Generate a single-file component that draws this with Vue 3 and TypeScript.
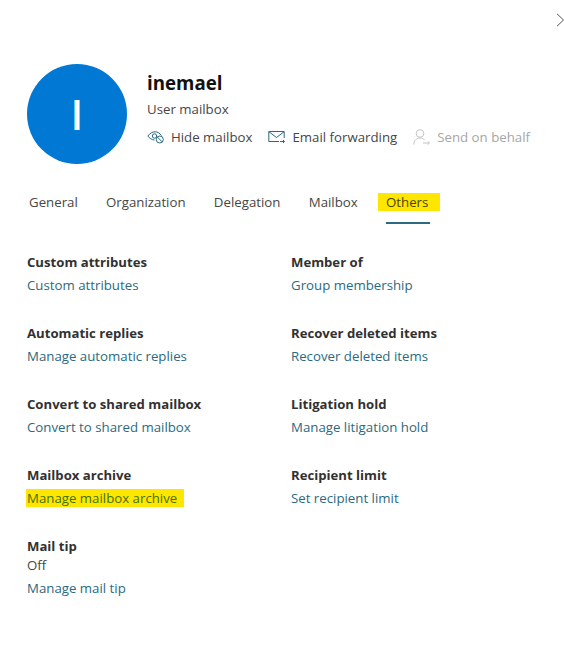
<script setup lang="ts">
interface Item { title: string; value?: string; link: string; mark?: boolean }
const tabs = ['General', 'Organization', 'Delegation', 'Mailbox']
const left: Item[] = [
  { title: 'Custom attributes', link: 'Custom attributes' },
  { title: 'Automatic replies', link: 'Manage automatic replies' },
  { title: 'Convert to shared mailbox', link: 'Convert to shared mailbox' },
  { title: 'Mailbox archive', link: 'Manage mailbox archive', mark: true },
  { title: 'Mail tip', value: 'Off', link: 'Manage mail tip' },
]
const right: Item[] = [
  { title: 'Member of', link: 'Group membership' },
  { title: 'Recover deleted items', link: 'Recover deleted items' },
  { title: 'Litigation hold', link: 'Manage litigation hold' },
  { title: 'Recipient limit', link: 'Set recipient limit' },
]
</script>

<template>
  <div class="panel">
    <div class="close-row">
      <svg width="10" height="14" viewBox="0 0 10 14"><path d="M3 .8 9.500 7 3 13.200" fill="none" stroke="#555" stroke-width="1"/></svg>
    </div>
    <header class="head">
      <div class="avatar"><span class="initial">I</span></div>
      <div class="meta">
        <div class="name">inemael</div>
        <div class="kind">User mailbox</div>
        <div class="actions">
          <span class="action">
            <svg width="18" height="14" viewBox="0 0 18 14" fill="none" stroke="#2b6a80" stroke-width="1">
              <path d="M.8 6C3 3 5.500 1.800 8 1.800S12.500 3 14.500 5.500"/>
              <path d="M.8 6C2.500 8.300 4.800 9.800 7.500 10"/>
              <circle cx="7.500" cy="6" r="2.200"/>
              <circle cx="12.800" cy="9.500" r="3.500"/>
              <path d="M10.400 7.100l4.800 4.800"/>
            </svg>
            Hide mailbox
          </span>
          <span class="action">
            <svg width="18" height="14" viewBox="0 0 18 14" fill="none" stroke="#2b6a80" stroke-width="1">
              <path d="M11 11.500H.8V1.500h15.400v6.500"/>
              <path d="M1 1.800 8.500 7.500 16 1.800"/>
              <path d="M12 11.500h4.500M15 10l1.500 1.500L15 13"/>
            </svg>
            Email forwarding
          </span>
          <span class="action off">
            <svg width="18" height="17" viewBox="0 0 18 17" fill="none" stroke="#c4c4c4" stroke-width="1">
              <circle cx="7" cy="4.500" r="3.800"/>
              <path d="M.8 15.500c0-3.800 2.700-6.500 6.200-6.500 2 0 3.500.8 4.700 2"/>
              <path d="M10 14h6.500M14.800 12.300l1.700 1.700-1.700 1.700"/>
            </svg>
            Send on behalf
          </span>
        </div>
      </div>
    </header>

    <nav class="tabs">
      <span v-for="t in tabs" :key="t" class="tab">{{ t }}</span>
      <span class="tab active"><span class="hl tab-hl">Others</span></span>
    </nav>

    <section class="grid">
      <div class="col">
        <div v-for="i in left" :key="i.title" class="item">
          <div class="title">{{ i.title }}</div>
          <div v-if="i.value" class="value">{{ i.value }}</div>
          <a class="link" :class="{ hl: i.mark }">{{ i.link }}</a>
        </div>
      </div>
      <div class="col">
        <div v-for="i in right" :key="i.title" class="item">
          <div class="title">{{ i.title }}</div>
          <a class="link">{{ i.link }}</a>
        </div>
      </div>
    </section>
  </div>
</template>

<style scoped>
.panel {
  width: 564px;
  height: 645px;
  box-sizing: border-box;
  background: #fff;
  font-family: "Open Sans", "Noto Sans", sans-serif;
  font-size: 13.25px;
  color: #484644;
  overflow: hidden;
}
.close-row {
  display: flex;
  justify-content: flex-end;
  height: 64px;
  padding-top: 13px;
  box-sizing: border-box;
}
.head {
  display: flex;
  padding-left: 27px;
  gap: 20px;
}
.avatar {
  width: 100px;
  height: 100px;
  border-radius: 50%;
  background: #0078d4;
  display: flex;
  align-items: center;
  justify-content: center;
  flex: none;
}
.initial {
  color: #fff;
  font-size: 42px;
  font-weight: 600;
  line-height: 1;
}
.meta { display: flex; flex-direction: column; }
.name {
  font-size: 18.7px;
  font-weight: 700;
  line-height: 28px;
  margin-top: 5px;
  color: #111;
}
.kind { line-height: 18px; margin-top: 3px; color: #484644; }
.actions {
  display: flex;
  gap: 16px;
  margin-top: 10px;
  line-height: 18px;
  white-space: nowrap;
}
.action { display: inline-flex; align-items: center; gap: 6px; color: #484644; }
.action.off { color: #a6a6a6; }
.tabs {
  display: flex;
  gap: 28.3px;
  padding: 29px 0 0 29px;
  line-height: 18px;
}
.tab { color: #484644; padding-bottom: 13px; position: relative; }
.active::after {
  content: "";
  position: absolute;
  left: 0;
  bottom: 0;
  height: 2px;
  width: 44px;
  background: #2b6a80;
}
.hl { background: #ffe600; color: #3f7300; }
.tab-hl { color: #484400; padding: 0 12px 0 8px; margin-left: -8px; }
.grid {
  display: grid;
  grid-template-columns: 264px 1fr;
  padding: 29px 0 0 27px;
}
.col { display: flex; flex-direction: column; gap: 30px; }
.title { font-weight: 700; font-size: 13.15px; line-height: 18px; color: #323130; }
.value { line-height: 18px; margin-top: 1px; }
.item { display: flex; flex-direction: column; align-items: flex-start; }
.link { color: #2b6a80; line-height: 18px; margin-top: 5px; }
.link.hl { color: #3f7300; padding: 0 7px 0 1px; margin-left: -1px; }
</style>
